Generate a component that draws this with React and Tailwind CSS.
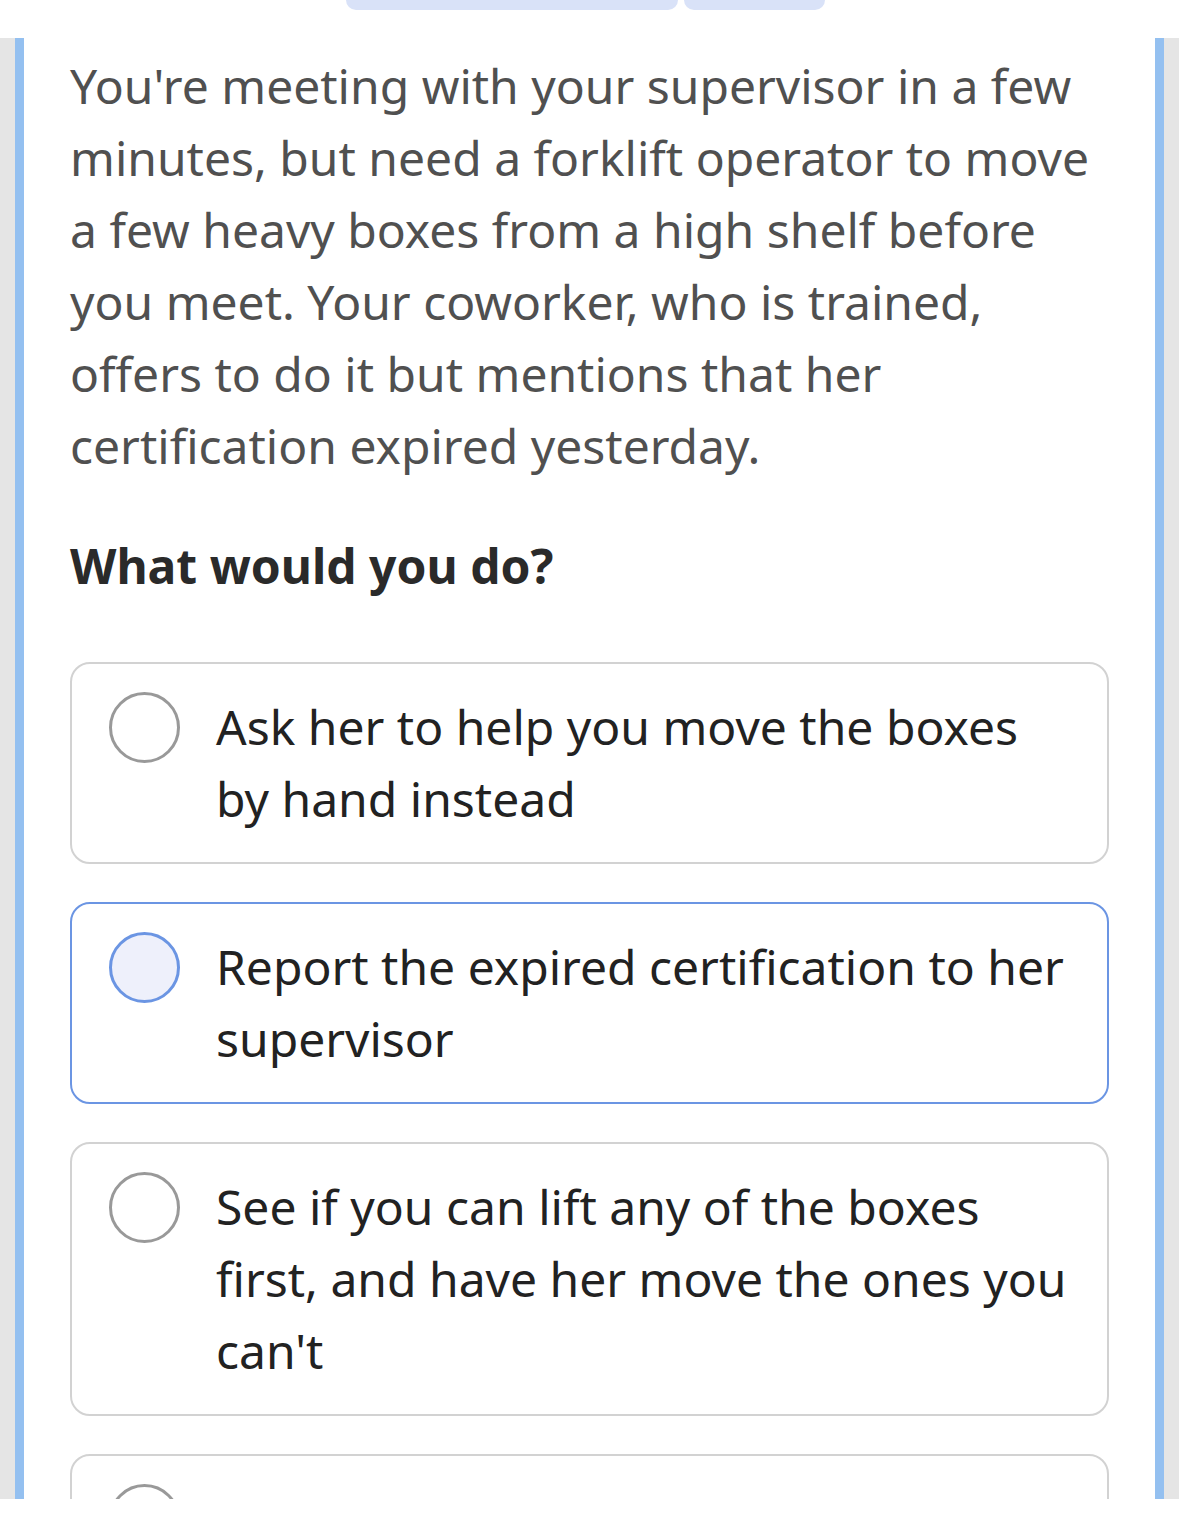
import React, { useState } from 'react';

const options = [
  { id: 'a', text: 'Ask her to help you move the boxes by hand instead' },
  { id: 'b', text: 'Report the expired certification to her supervisor' },
  {
    id: 'c',
    text: "See if you can lift any of the boxes first, and have her move the ones you can't",
  },
  // last option is scrolled below the fold, its label isn't visible
  { id: 'd', text: '' },
];

const App = () => {
  const [selected, setSelected] = useState('b');

  return (
    <div
      className="w-[1179px] h-[1525px] bg-white overflow-hidden"
      style={{ fontFamily: '"Noto Sans", "Open Sans", sans-serif' }}
    >
      {/* Top tabs */}
      <div className="h-[38px] flex justify-center gap-[6px]">
        <div className="w-[332px] h-[10px] bg-[#d9e2f8] rounded-b-[12px] ml-[-8px]" />
        <div className="w-[141px] h-[10px] bg-[#d9e2f8] rounded-b-[12px]" />
      </div>

      {/* Frame */}
      <div className="h-[1461px] bg-[#e5e5e5] px-[15px]">
        <div className="h-full bg-white border-x-[9px] border-[#94c0f0] overflow-hidden px-[46px] pt-[12px]">
          <p className="text-[48px] leading-[72px] text-[#505050]">
            You're meeting with your supervisor in a few minutes, but need a forklift operator to
            move a few heavy boxes from a high shelf before you meet. Your coworker, who is trained,
            offers to do it but mentions that her certification expired yesterday.
          </p>

          <h2 className="mt-[48px] text-[48px] leading-[72px] font-bold text-[#2a2a2a]">
            What would you do?
          </h2>

          <div className="mt-[60px] flex flex-col gap-[38px]">
            {options.map((opt) => {
              const active = selected === opt.id;
              return (
                <button
                  key={opt.id}
                  onClick={() => setSelected(opt.id)}
                  className={`flex items-start gap-[36px] text-left rounded-[20px] border-2 pl-[37px] pr-[30px] py-[27px] ${
                    active ? 'border-[#6b95e3]' : 'border-[#d2d2d2]'
                  }`}
                >
                  <span
                    className={`mt-[1px] shrink-0 w-[71px] h-[71px] rounded-full border-[3px] ${
                      active ? 'border-[#6b95e3] bg-[#eef0fb]' : 'border-[#999] bg-white'
                    }`}
                  />
                  <span className="min-h-[144px] text-[48px] leading-[72px] text-[#222]">
                    {opt.text}
                  </span>
                </button>
              );
            })}
          </div>
        </div>
      </div>
    </div>
  );
};

export default App;
